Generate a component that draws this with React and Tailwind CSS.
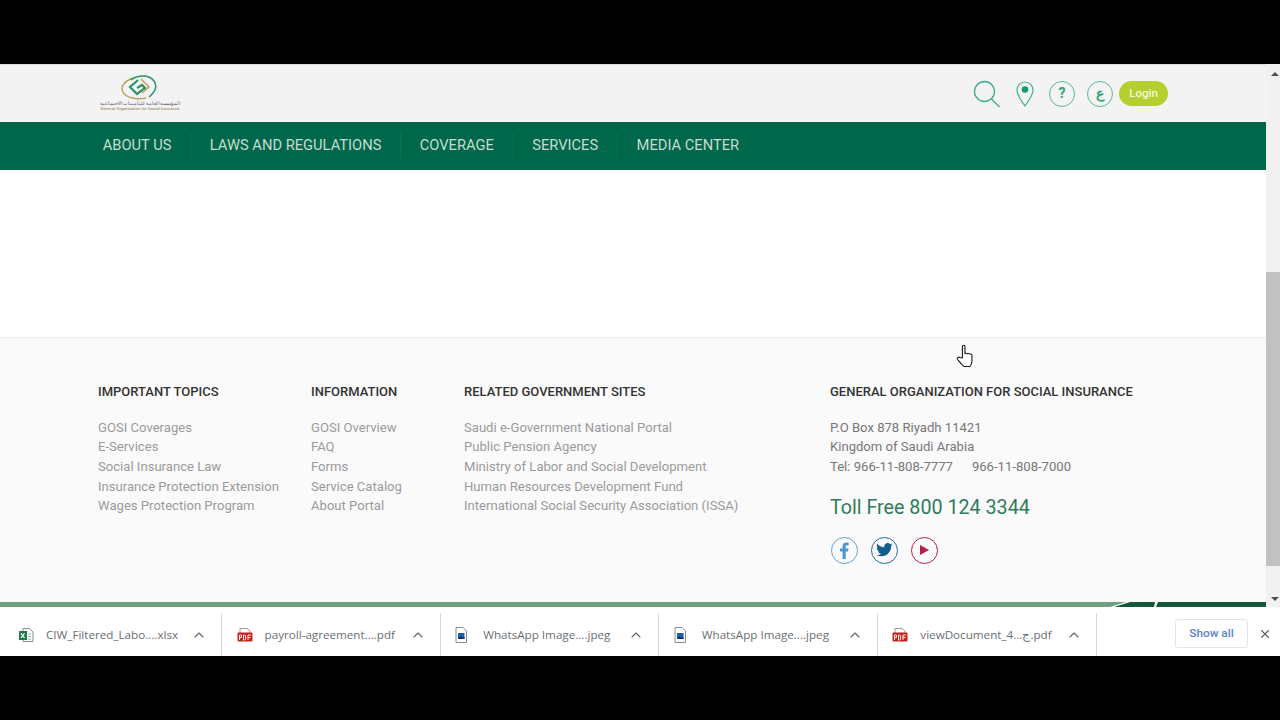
import { ChevronUp, X } from 'lucide-react';

const navItems = ['ABOUT US', 'LAWS AND REGULATIONS', 'COVERAGE', 'SERVICES', 'MEDIA CENTER'];

const columns = [
    {
        title: 'IMPORTANT TOPICS',
        width: 'w-[213px]',
        links: ['GOSI Coverages', 'E-Services', 'Social Insurance Law', 'Insurance Protection Extension', 'Wages Protection Program'],
    },
    {
        title: 'INFORMATION',
        width: 'w-[153px]',
        links: ['GOSI Overview', 'FAQ', 'Forms', 'Service Catalog', 'About Portal'],
    },
    {
        title: 'RELATED GOVERNMENT SITES',
        width: 'w-[366px]',
        links: [
            'Saudi e-Government National Portal',
            'Public Pension Agency',
            'Ministry of Labor and Social Development',
            'Human Resources Development Fund',
            'International Social Security Association (ISSA)',
        ],
    },
];

const downloads = [
    { name: 'CIW_Filtered_Labo....xlsx', type: 'xlsx' },
    { name: 'payroll-agreement....pdf', type: 'pdf' },
    { name: 'WhatsApp Image....jpeg', type: 'img' },
    { name: 'WhatsApp Image....jpeg', type: 'img' },
    { name: 'viewDocument_4...ج.pdf', type: 'pdf' },
];

function Logo() {
    return (
        <div className="flex w-[84px] flex-col items-center pb-[2px]">
            <svg width="40" height="26" viewBox="0 0 40 26" fill="none">
                <path d="M13 3C5 6 0 11 3 17c3 6 14 8 23 6" stroke="#b9a05c" strokeWidth="1.5" />
                <path d="M11 5C17 0 29 -1 34 6c4 6 0 12-5 16" stroke="#2b9468" strokeWidth="1.5" />
                <path d="M18 5l-8 7 7 7 8-6-3-3-5 3" stroke="#2b9468" strokeWidth="2.2" />
                <path d="M21 4l8 8-7 6" stroke="#b9a05c" strokeWidth="1.5" />
            </svg>
            <div dir="rtl" className="text-[5px] leading-[5px] whitespace-nowrap text-[#556]">
                المؤسسة العامة للتأمينات الاجتماعية
            </div>
            <div className="mt-[1px] text-[4.3px] leading-[4px] whitespace-nowrap text-[#8a7a3c]">General Organization for Social Insurance</div>
        </div>
    );
}

function CircleIcon({ children }) {
    return (
        <div className="flex h-[26px] w-[26px] items-center justify-center rounded-full border border-[#5cba94] text-[14px] font-bold text-[#2fa678]">
            {children}
        </div>
    );
}

function FileIcon({ type }) {
    if (type === 'xlsx') {
        return (
            <svg width="16" height="16" viewBox="0 0 16 16">
                <path d="M5 1.500h6.500L15 5v9.500H5z" fill="#fff" stroke="#8a8a8a" />
                <path d="M10 7h3M10 9.500h3M10 12h3" stroke="#7fb894" />
                <rect x="1" y="4" width="8" height="9" fill="#1d7a45" />
                <path d="M3 6.300l3.500 4.500M6.500 6.300L3 10.800" stroke="#fff" strokeWidth="1.200" />
            </svg>
        );
    }
    if (type === 'pdf') {
        return (
            <svg width="16" height="16" viewBox="0 0 16 16">
                <path d="M3 6V1.500h7L13 4v2" fill="#fff" stroke="#9a9a9a" />
                <rect x="0.500" y="5.500" width="15" height="9" rx="1" fill="#c9211e" />
                <path d="M2.500 13V8h2v2.500h-2M6.500 8v5h1.200l1-1V9l-1-1zM11 13V8h3M11 10.500h2.500" stroke="#fff" strokeWidth="0.900" fill="none" />
            </svg>
        );
    }
    return (
        <svg width="12" height="16" viewBox="0 0 12 16">
            <path d="M1 .5h7L11.500 4v11.500H1z" fill="#fff" stroke="#8a8a8a" />
            <rect x="3" y="6" width="6.500" height="6" fill="#1e5fa8" />
            <path d="M3 12l2.500-3 2 2 2-1v2z" fill="#0c2f66" />
        </svg>
    );
}

function DownloadItem({ item }) {
    return (
        <div className="flex h-full w-[218.6px] shrink-0 items-center border-r border-[#d8d8d8] pl-[14.4px] pr-[14px]">
            <div className="flex w-[28px] shrink-0 items-center">
                <FileIcon type={item.type} />
            </div>
            <span className="flex-1 truncate pt-[1px] font-['Open_Sans',sans-serif] text-[11.65px] text-[#6a6e72]">{item.name}</span>
            <ChevronUp size={16} strokeWidth={1.6} className="text-[#5f6368]" />
        </div>
    );
}

export default function App() {
    return (
        <div className="relative flex h-screen w-[1280px] flex-col overflow-hidden bg-black py-16 font-['Roboto',sans-serif]">
            <div className="flex h-[538px] shrink-0">
                <div className="flex w-[1266px] flex-col">
                    <header className="flex h-[58px] shrink-0 items-center justify-between border-t border-[#dedede] bg-[#f3f3f3] px-[98px]">
                        <Logo />
                        <div className="flex items-center gap-[12px]">
                            <svg width="28" height="28" viewBox="0 0 28 28" fill="none" stroke="#3fae84" strokeWidth="1.3">
                                <circle cx="11.500" cy="11.500" r="10" />
                                <path d="M18.500 19l8 8" />
                            </svg>
                            <svg width="18" height="26" viewBox="0 0 18 26" fill="none" className="mx-[3px]">
                                <path d="M9 25C5 19 1 14.500 1 9a8 8 0 0 1 16 0c0 5.500-4 10-8 16z" stroke="#46b189" strokeWidth="1.200" />
                                <circle cx="9" cy="8.500" r="3.300" fill="#0f9d64" />
                            </svg>
                            <CircleIcon>?</CircleIcon>
                            <CircleIcon>ع</CircleIcon>
                            <div className="ml-[-6px] flex h-[25px] w-[49px] items-center justify-center rounded-full bg-[#b5cf2e] text-[11.5px] font-medium text-[#f4f8dc]">
                                Login
                            </div>
                        </div>
                    </header>

                    <nav className="flex h-[48px] shrink-0 items-center bg-[#00674a] pb-[1px] pl-[84px]">
                        {navItems.map((item, i) => (
                            <div key={item} className={`flex h-[26px] items-center px-[18.7px] text-[14.7px] text-[#c4dcd1] ${i < navItems.length - 1 ? 'border-r border-[#0a7354]' : ''}`}>
                                {item}
                            </div>
                        ))}
                    </nav>

                    <div className="h-[167px] shrink-0 bg-white" />

                    <footer className="flex flex-1 border-t border-[#ececec] bg-[#fafafa] pl-[98px] pt-[46px]">
                        {columns.map((col) => (
                            <div key={col.title} className={col.width}>
                                <h4 className="text-[13px] leading-[15px] font-medium whitespace-nowrap text-[#333]">{col.title}</h4>
                                <ul className="mt-[18.8px]">
                                    {col.links.map((link) => (
                                        <li key={link} className="text-[13.1px] leading-[19.6px] whitespace-nowrap text-[#9a9a9a]">
                                            {link}
                                        </li>
                                    ))}
                                </ul>
                            </div>
                        ))}
                        <div className="flex-1">
                            <h4 className="text-[13px] leading-[15px] font-medium whitespace-nowrap text-[#333]">GENERAL ORGANIZATION FOR SOCIAL INSURANCE</h4>
                            <div className="mt-[18.8px] text-[13.1px] leading-[19.6px] text-[#777]">
                                <div>P.O Box 878 Riyadh 11421</div>
                                <div>Kingdom of Saudi Arabia</div>
                                <div className="flex gap-[19px]">
                                    <span>Tel: 966-11-808-7777</span>
                                    <span>966-11-808-7000</span>
                                </div>
                            </div>
                            <div className="mt-[19px] text-[19.7px] leading-[24px] text-[#2f7a5c]">Toll Free 800 124 3344</div>
                            <div className="mt-[17.4px] flex gap-[13px]">
                                <div className="ml-[1px] flex h-[27px] w-[27px] items-center justify-center rounded-full border border-[#5ba3dd]">
                                    <svg width="9" height="17" viewBox="0 0 9 17" fill="#4a94d6">
                                        <path d="M2.600 17V9.400H0V6.600h2.600V4.400C2.600 1.800 4 .5 6.200.5H8.600v2.800H7c-.9 0-1.300.5-1.300 1.300v2h2.800l-.4 2.800H5.700V17z" />
                                    </svg>
                                </div>
                                <div className="flex h-[27px] w-[27px] items-center justify-center rounded-full border border-[#1a6a96]">
                                    <svg width="17" height="14" viewBox="0 0 24 20" fill="#125f8e">
                                        <path d="M24 2.400c-.9.4-1.800.7-2.800.8 1-.6 1.800-1.600 2.200-2.700-1 .6-2 1-3.100 1.200C19.300.7 18 0 16.600 0c-2.700 0-4.900 2.200-4.900 4.900 0 .4 0 .8.1 1.100C7.700 5.800 4.100 3.900 1.700.9c-.4.7-.7 1.600-.7 2.500 0 1.700.9 3.200 2.200 4.100-.8 0-1.600-.2-2.200-.6v.1c0 2.400 1.700 4.400 3.900 4.800-.4.1-.8.2-1.300.2-.3 0-.6 0-.9-.1.6 2 2.400 3.400 4.600 3.400-1.700 1.300-3.800 2.100-6.100 2.100-.4 0-.8 0-1.200-.1C2.200 18.200 4.800 19 7.500 19c9.100 0 14-7.500 14-14v-.6c1-.7 1.800-1.600 2.500-2z" />
                                    </svg>
                                </div>
                                <div className="flex h-[27px] w-[27px] items-center justify-center rounded-full border border-[#b81d4a]">
                                    <svg width="9" height="10" viewBox="0 0 9 10" fill="#b81d4a">
                                        <path d="M0 0l9 5-9 5z" />
                                    </svg>
                                </div>
                            </div>
                        </div>
                    </footer>
                </div>

                <div className="relative w-[14px] shrink-0 bg-[#f1f1f1]">
                    <div className="mt-[208px] h-[294px] bg-[#c1c1c1]" />
                    <div className="absolute top-[8px] left-[5px] h-0 w-0 border-x-[4.5px] border-b-[4px] border-x-transparent border-b-[#505050]" />
                    <div className="absolute bottom-[1px] left-[5px] h-0 w-0 border-x-[4.5px] border-t-[4px] border-x-transparent border-t-[#505050]" />
                </div>
            </div>

            <div className="flex h-[5px] w-full shrink-0">
                <div className="w-[1090px] bg-[#6f9f7e]" />
                <svg width="176" height="5" viewBox="0 0 176 5" className="shrink-0">
                    <rect width="176" height="5" fill="#14583a" />
                    <path d="M0 0h40l-16 5H0z" fill="#6f9f7e" />
                    <path d="M40 0l-16 5h-4l16-5zM68 0l-2 5h-2l1-5z" fill="#fff" />
                </svg>
                <div className="w-[14px] bg-[#f1f1f1]" />
            </div>

            <div className="flex h-[49px] shrink-0 items-center bg-white">
                <div className="flex h-full items-center pl-[3.6px] pt-[6px]">
                    {downloads.map((item, i) => (
                        <DownloadItem key={i} item={item} />
                    ))}
                </div>
                <div className="ml-auto flex items-center gap-[10px] pr-[8px] pt-[4px]">
                    <div className="flex h-[29px] w-[73px] items-center justify-center rounded-[3px] border border-[#e3e5e8] text-[11.8px] font-medium text-[#5f80cc]">
                        Show all
                    </div>
                    <X size={14} strokeWidth={2} className="text-[#5f6368]" />
                </div>
            </div>

            <svg width="17" height="24" viewBox="0 0 16 24" preserveAspectRatio="none" className="absolute top-[344px] left-[956px]" fill="#fff" stroke="#111" strokeWidth="1">
                <path d="M6 14V2.500c0-1.600 2.400-1.600 2.400 0V10c0-1 2.200-1 2.200.2 0-1 2.200-1 2.200.3 0-.9 2.200-.8 2.200.5v6c0 2.500-1.500 5-2 5.500H7.500C5 20 3.500 18 1.500 15.500c-1-1.500.8-3 2-2z" />
            </svg>
        </div>
    );
}
